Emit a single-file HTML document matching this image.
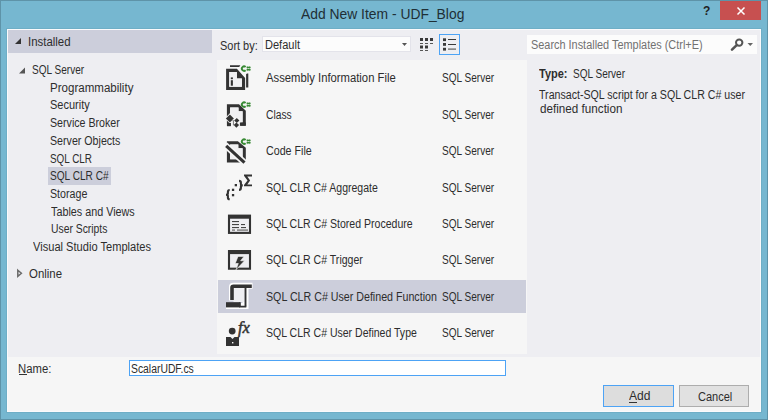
<!DOCTYPE html>
<html><head><meta charset="utf-8"><style>
html,body{margin:0;padding:0;width:768px;height:420px;overflow:hidden;background:#76B7D0;}
body{position:relative;font-family:"Liberation Sans",sans-serif;}
.r{position:absolute;box-sizing:border-box;}
.t{position:absolute;white-space:pre;transform-origin:0 0;}
u{text-decoration:none;border-bottom:1px solid #1e1e1e;}
svg{position:absolute;left:0;top:0;}
</style></head><body>
<div class="r" style="left:0;top:0;width:768px;height:420px;border:1px solid #5E93A8;"></div>
<div class="r" style="left:6px;top:28px;width:756px;height:385px;background:#6EAEC6;"></div>
<div class="r" style="left:7px;top:29px;width:754px;height:383px;background:#EEEEF2;border:1px solid #FAFAFC;"></div>
<div class="r" style="left:8px;top:30px;width:204px;height:23px;background:#CCCEDB;"></div>
<div class="r" style="left:217px;top:60px;width:310px;height:294px;background:#F6F6F6;"></div>
<div class="r" style="left:218px;top:280px;width:308px;height:33px;background:#CCCEDB;"></div>
<div class="r" style="left:48px;top:167px;width:63px;height:18px;background:#CCCEDB;"></div>
<div class="r" style="left:8px;top:357px;width:752px;height:54px;background:#F6F6F6;"></div>
<div class="r" style="left:262px;top:36px;width:149px;height:16px;background:#FCFCFC;border:1px solid #E3E3EA;"></div>
<div class="r" style="left:527px;top:35px;width:230px;height:19px;background:#FCFCFC;"></div>
<div class="r" style="left:129px;top:360px;width:377px;height:16px;background:#FFFFFF;border:1px solid #4DA3F5;"></div>
<div class="r" style="left:603px;top:385px;width:71px;height:22px;background:#DDDDDD;border:1px solid #4DA3F5;"></div>
<div class="r" style="left:679px;top:385px;width:70px;height:22px;background:#E1E1E1;border:1px solid #ADADAD;"></div>
<div class="r" style="left:720px;top:1px;width:41px;height:19px;background:#C75050;"></div>
<div class="r" style="left:439px;top:34px;width:21px;height:21px;border:1px solid #4DA3F5;"></div>
<div class="r" style="left:19px;top:373.5px;width:8px;height:1px;background:#333;"></div>
<div class="r" style="left:629px;top:401.5px;width:8px;height:1px;background:#333;"></div>
<svg width="768" height="420" viewBox="0 0 768 420">
<!-- tree triangles -->
<path d="M15,44 L21,38 L21,44 Z" fill="#333"/>
<path d="M19,73.5 L25,67.5 L25,73.5 Z" fill="#555"/>
<path d="M17.8,270.2 L21.4,273.3 L17.8,276.4 Z" fill="none" stroke="#6a6a6a" stroke-width="1.5" stroke-linejoin="miter"/>
<!-- dropdown arrow -->
<path d="M402,43 H407 L404.5,46 Z" fill="#555"/>
<!-- grid view icon -->
<g fill="#3a3a3a">
<rect x="420" y="38" width="3" height="3"/><rect x="425" y="38" width="3" height="3"/><rect x="430" y="38" width="3" height="3"/>
<rect x="420" y="45.5" width="3" height="3"/><rect x="425" y="45.5" width="3" height="3"/>
</g>
<g fill="#555">
<rect x="420" y="43" width="3" height="1"/><rect x="425" y="43" width="3" height="1"/><rect x="430" y="43" width="3" height="1"/>
<rect x="420" y="50" width="3" height="1"/><rect x="425" y="50" width="3" height="1"/>
</g>
<!-- list view icon -->
<g fill="#3a3a3a">
<rect x="443" y="38.3" width="3" height="2.8"/><rect x="443" y="43" width="3" height="2.8"/><rect x="443" y="47.8" width="3" height="2.8"/>
<rect x="448" y="39" width="8" height="1"/><rect x="448" y="44" width="8" height="1"/><rect x="448" y="48.3" width="8" height="1.7" fill="#888"/>
</g>
<!-- search magnifier -->
<circle cx="739.2" cy="42.6" r="3.2" fill="none" stroke="#555" stroke-width="2"/>
<path d="M736.7,45.1 L732,49.6" stroke="#555" stroke-width="2.6" stroke-linecap="round"/>
<path d="M747.5,43 H753 L750.25,46 Z" fill="#666"/>
<!-- help ? -->
<text x="703" y="15" font-family="Liberation Sans" font-weight="700" font-size="12" fill="#222">?</text>
<!-- close X -->
<path d="M737.5,7.5 L744.5,14.5 M744.5,7.5 L737.5,14.5" stroke="#fff" stroke-width="1.5"/>

<!-- icon 1: assembly info -->
<g fill="#333">
<path d="M230,65.2 H240.4 L239.2,67 H230 Z"/>
<path d="M246.1,74.2 L247,73.4 H248.3 V87.4 H246.1 Z"/>
<path fill-rule="evenodd" d="M226.1,68.8 H236.9 L245.1,77.9 V89.9 H226.1 Z M229.3,72 H236.9 V78.4 H241.9 V86.7 H229.3 Z"/>
<path d="M229.3,72 H236.9 V78.4 H241.9 V86.7 H229.3 Z" fill="#F0F0F2"/>
<rect x="230.8" y="77.4" width="2.1" height="1.8"/>
<rect x="230.8" y="80.2" width="2.1" height="5.5"/>
</g>
<g fill="#388A34"><path d="M245.61,66.93 A2.25,2.25 0 1 0 245.61,70.27" fill="none" stroke="#388A34" stroke-width="1.9"/><rect x="246.6" y="66.70" width="4" height="1.5"/><rect x="246.6" y="69.00" width="4" height="1.5"/><rect x="247.3" y="66.10" width="0.8" height="5" opacity="0.5"/><rect x="249.2" y="66.10" width="0.8" height="5" opacity="0.5"/></g>
<!-- icon 2: class -->
<g fill="#333">
<path fill-rule="evenodd" d="M226.9,104.3 H239 L245.8,110.7 V125.7 H226.9 Z M230.1,107.5 H238.5 V111.2 H242.6 V122.5 H230.1 Z"/>
<path d="M230.1,107.5 H238.5 V111.2 H242.6 V122.5 H230.1 Z" fill="#F0F0F2"/>
<path d="M229.9,113.2 L235.1,118.4 L229.9,123.6 L224.7,118.4 Z" fill="#F6F6F6"/>
<rect x="230.9" y="118" width="9" height="10" fill="#F6F6F6"/>
<path d="M229.9,114.4 L233.9,118.4 L229.9,122.4 L225.9,118.4 Z"/>
<path d="M236.8,117.9 L239.4,120.5 L236.8,123.1 L234.2,120.5 Z"/>
<path d="M236.4,122.4 L239.1,125.1 L236.4,127.8 L233.7,125.1 Z"/>
<path d="M232,119.5 L233.4,120.5 V125 H235" fill="none" stroke="#777" stroke-width="1"/>
<rect x="227" y="123.1" width="3.9" height="3.1"/>
<rect x="240.3" y="122.5" width="5.5" height="3.2"/>
</g>
<g fill="#388A34"><path d="M245.61,102.93 A2.25,2.25 0 1 0 245.61,106.27" fill="none" stroke="#388A34" stroke-width="1.9"/><rect x="246.6" y="102.70" width="4" height="1.5"/><rect x="246.6" y="105.00" width="4" height="1.5"/><rect x="247.3" y="102.10" width="0.8" height="5" opacity="0.5"/><rect x="249.2" y="102.10" width="0.8" height="5" opacity="0.5"/></g>
<!-- icon 3: code file -->
<g fill="#333">
<path fill-rule="evenodd" d="M226.9,141.3 H237.9 L245.8,147.7 V162.4 H226.9 Z M230.1,144.5 H238.3 V148.2 H242.6 V159.2 H230.1 Z"/>
<path d="M230.1,144.5 H238.3 V148.2 H242.6 V159.2 H230.1 Z" fill="#F0F0F2"/>
<path d="M225,144.8 L245.6,163.6" stroke="#F6F6F6" stroke-width="6.4"/>
<path d="M226.2,145.9 L244.5,162.6" stroke="#333" stroke-width="3.1"/>
</g>
<g fill="#388A34"><path d="M245.61,139.93 A2.25,2.25 0 1 0 245.61,143.27" fill="none" stroke="#388A34" stroke-width="1.9"/><rect x="246.6" y="139.70" width="4" height="1.5"/><rect x="246.6" y="142.00" width="4" height="1.5"/><rect x="247.3" y="139.10" width="0.8" height="5" opacity="0.5"/><rect x="249.2" y="139.10" width="0.8" height="5" opacity="0.5"/></g>
<!-- icon 4: aggregate -->
<g fill="none" stroke="#333" stroke-width="2.1">
<path d="M229.7,190 Q227.9,190 227.9,192 V193.5 Q227.9,194.7 226,194.7 Q227.9,194.7 227.9,196 V197.5 Q227.9,199.3 229.7,199.3"/>
<path d="M239,180.9 Q240.9,180.9 240.9,182.7 V184.2 Q240.9,185.4 242.8,185.4 Q240.9,185.4 240.9,186.6 V188.1 Q240.9,189.9 239,189.9"/>
</g>
<path d="M244,174.5 H252 V176.4 H247.3 L250.1,180.4 L247.3,184.4 H252 V186.3 H244 V185 L247.5,180.4 L244,175.8 Z" fill="#333"/>
<g fill="#333"><rect x="231.9" y="188.7" width="2.3" height="2.3"/><rect x="231.9" y="194" width="2.3" height="2.3"/><rect x="234.7" y="184" width="2.3" height="2.3"/></g>
<!-- icon 5: stored procedure -->
<g>
<rect x="229" y="215.8" width="21" height="17.1" fill="#EEEEF2" stroke="#333" stroke-width="2.1"/>
<rect x="228" y="214.8" width="23" height="3.9" fill="#333"/>
<g fill="#444"><rect x="232" y="221" width="7" height="1.1"/><rect x="232" y="224" width="7" height="1.1"/><rect x="241" y="224" width="4" height="1.1"/>
<rect x="232" y="227" width="7" height="1.1"/><rect x="241" y="227" width="5" height="1.1"/></g>
<g fill="#888"><rect x="232" y="229.3" width="3" height="1.6"/><rect x="237" y="229.3" width="11" height="1.6"/></g>
</g>
<!-- icon 6: trigger -->
<g>
<rect x="229" y="251.1" width="21" height="17.6" fill="#EEEEF2" stroke="#333" stroke-width="2.1"/>
<rect x="228" y="250.2" width="23" height="3.9" fill="#333"/>
<path d="M238,256.4 H244 L240.6,260.8 H244.5 L236,269.8 L238.3,263.5 H235.2 Z" fill="#333" stroke="#F6F6F6" stroke-width="0.6"/>
</g>
<!-- icon 7: UDF scroll -->
<g>
<path d="M232,300.5 V287 Q232,285.8 233.5,285.8 H252.5 M245.5,288 V306 H226" fill="none" stroke="#fff" stroke-width="6"/>
<rect x="233.5" y="288.4" width="11.1" height="13.6" fill="#EFEFF2"/>
<path d="M232,300 V287.5 Q232,286.2 233.5,286.2 H251.8" fill="none" stroke="#333" stroke-width="3.6"/>
<path d="M245.5,288 V306.5" fill="none" stroke="#333" stroke-width="1.9"/>
<path d="M226,304.8 H240" fill="none" stroke="#333" stroke-width="5.2"/>
<path d="M240,302.3 V306.6 H246.3" fill="none" stroke="#333" stroke-width="1.6"/>
</g>
<!-- icon 8: UDT -->
<g>
<circle cx="232.2" cy="331.1" r="3.4" fill="#333"/>
<path d="M226,337 H230.5 L232.5,339 L234.5,337 H239 V346 H226 Z" fill="#333"/>
<rect x="232" y="342" width="1.4" height="1.4" fill="#fff"/>
<text x="238" y="332.6" font-family="Liberation Serif" font-style="italic" font-weight="400" font-size="16.5" fill="#333" stroke="#333" stroke-width="0.5">fx</text>
</g>
</svg>

<span class="t" style="left:301.40px;top:7.43px;font-size:14.5px;line-height:14.5px;color:#1f2f36;font-weight:400;transform:scaleX(0.9563)">Add New Item - UDF_Blog</span>
<span class="t" style="left:27.85px;top:35.94px;font-size:12px;line-height:12px;color:#2d2d2d;font-weight:400;transform:scaleX(0.9530)">Installed</span>
<span class="t" style="left:32.25px;top:64.04px;font-size:12px;line-height:12px;color:#2d2d2d;font-weight:400;transform:scaleX(0.8374)">SQL Server</span>
<span class="t" style="left:50.10px;top:81.74px;font-size:12px;line-height:12px;color:#2d2d2d;font-weight:400;transform:scaleX(0.9621)">Programmability</span>
<span class="t" style="left:50.10px;top:99.44px;font-size:12px;line-height:12px;color:#2d2d2d;font-weight:400;transform:scaleX(0.9159)">Security</span>
<span class="t" style="left:50.10px;top:117.14px;font-size:12px;line-height:12px;color:#2d2d2d;font-weight:400;transform:scaleX(0.8870)">Service Broker</span>
<span class="t" style="left:50.10px;top:134.84px;font-size:12px;line-height:12px;color:#2d2d2d;font-weight:400;transform:scaleX(0.8871)">Server Objects</span>
<span class="t" style="left:50.10px;top:152.54px;font-size:12px;line-height:12px;color:#2d2d2d;font-weight:400;transform:scaleX(0.8242)">SQL CLR</span>
<span class="t" style="left:50.30px;top:170.14px;font-size:12px;line-height:12px;color:#2d2d2d;font-weight:400;transform:scaleX(0.8415)">SQL CLR C#</span>
<span class="t" style="left:50.10px;top:187.84px;font-size:12px;line-height:12px;color:#2d2d2d;font-weight:400;transform:scaleX(0.8877)">Storage</span>
<span class="t" style="left:50.80px;top:205.84px;font-size:12px;line-height:12px;color:#2d2d2d;font-weight:400;transform:scaleX(0.8984)">Tables and Views</span>
<span class="t" style="left:50.80px;top:223.44px;font-size:12px;line-height:12px;color:#2d2d2d;font-weight:400;transform:scaleX(0.8631)">User Scripts</span>
<span class="t" style="left:32.50px;top:240.94px;font-size:12px;line-height:12px;color:#2d2d2d;font-weight:400;transform:scaleX(0.9245)">Visual Studio Templates</span>
<span class="t" style="left:28.90px;top:268.34px;font-size:12px;line-height:12px;color:#2d2d2d;font-weight:400;transform:scaleX(0.9511)">Online</span>
<span class="t" style="left:220.10px;top:39.54px;font-size:12px;line-height:12px;color:#2d2d2d;font-weight:400;transform:scaleX(0.9118)">Sort by:</span>
<span class="t" style="left:265.20px;top:39.09px;font-size:12px;line-height:12px;color:#2d2d2d;font-weight:400;transform:scaleX(0.9202)">Default</span>
<span class="t" style="left:531.30px;top:38.64px;font-size:12px;line-height:12px;color:#717171;font-weight:400;transform:scaleX(0.9086)">Search Installed Templates (Ctrl+E)</span>
<span class="t" style="left:539.00px;top:67.94px;font-size:12px;line-height:12px;color:#2d2d2d;font-weight:700;transform:scaleX(0.9164)">Type:</span>
<span class="t" style="left:573.40px;top:67.94px;font-size:12px;line-height:12px;color:#2d2d2d;font-weight:400;transform:scaleX(0.8358)">SQL Server</span>
<span class="t" style="left:539.40px;top:89.24px;font-size:12px;line-height:12px;color:#2d2d2d;font-weight:400;transform:scaleX(0.8851)">Transact-SQL script for a SQL CLR C# user</span>
<span class="t" style="left:539.70px;top:103.04px;font-size:12px;line-height:12px;color:#2d2d2d;font-weight:400;transform:scaleX(0.9731)">defined function</span>
<span class="t" style="left:18.30px;top:362.64px;font-size:12px;line-height:12px;color:#2d2d2d;font-weight:400;transform:scaleX(0.9426)">Name:</span>
<span class="t" style="left:131.40px;top:363.09px;font-size:12px;line-height:12px;color:#2d2d2d;font-weight:400;transform:scaleX(0.8641)">ScalarUDF.cs</span>
<span class="t" style="left:628.50px;top:390.14px;font-size:12px;line-height:12px;color:#2d2d2d;font-weight:400;transform:scaleX(1.0059)">Add</span>
<span class="t" style="left:698.20px;top:390.74px;font-size:12px;line-height:12px;color:#2d2d2d;font-weight:400;transform:scaleX(0.9186)">Cancel</span>
<span class="t" style="left:265.90px;top:72.34px;font-size:12px;line-height:12px;color:#2d2d2d;font-weight:400;transform:scaleX(0.9395)">Assembly Information File</span>
<span class="t" style="left:442.40px;top:72.34px;font-size:12px;line-height:12px;color:#2d2d2d;font-weight:400;transform:scaleX(0.8374)">SQL Server</span>
<span class="t" style="left:265.90px;top:108.74px;font-size:12px;line-height:12px;color:#2d2d2d;font-weight:400;transform:scaleX(0.8565)">Class</span>
<span class="t" style="left:442.40px;top:108.74px;font-size:12px;line-height:12px;color:#2d2d2d;font-weight:400;transform:scaleX(0.8374)">SQL Server</span>
<span class="t" style="left:265.90px;top:145.14px;font-size:12px;line-height:12px;color:#2d2d2d;font-weight:400;transform:scaleX(0.8900)">Code File</span>
<span class="t" style="left:442.40px;top:145.14px;font-size:12px;line-height:12px;color:#2d2d2d;font-weight:400;transform:scaleX(0.8374)">SQL Server</span>
<span class="t" style="left:265.90px;top:181.54px;font-size:12px;line-height:12px;color:#2d2d2d;font-weight:400;transform:scaleX(0.8763)">SQL CLR C# Aggregate</span>
<span class="t" style="left:442.40px;top:181.54px;font-size:12px;line-height:12px;color:#2d2d2d;font-weight:400;transform:scaleX(0.8374)">SQL Server</span>
<span class="t" style="left:265.90px;top:217.94px;font-size:12px;line-height:12px;color:#2d2d2d;font-weight:400;transform:scaleX(0.8781)">SQL CLR C# Stored Procedure</span>
<span class="t" style="left:442.40px;top:217.94px;font-size:12px;line-height:12px;color:#2d2d2d;font-weight:400;transform:scaleX(0.8374)">SQL Server</span>
<span class="t" style="left:265.90px;top:254.34px;font-size:12px;line-height:12px;color:#2d2d2d;font-weight:400;transform:scaleX(0.8780)">SQL CLR C# Trigger</span>
<span class="t" style="left:442.40px;top:254.34px;font-size:12px;line-height:12px;color:#2d2d2d;font-weight:400;transform:scaleX(0.8374)">SQL Server</span>
<span class="t" style="left:265.90px;top:290.74px;font-size:12px;line-height:12px;color:#2d2d2d;font-weight:400;transform:scaleX(0.8887)">SQL CLR C# User Defined Function</span>
<span class="t" style="left:442.40px;top:290.74px;font-size:12px;line-height:12px;color:#2d2d2d;font-weight:400;transform:scaleX(0.8374)">SQL Server</span>
<span class="t" style="left:265.90px;top:327.14px;font-size:12px;line-height:12px;color:#2d2d2d;font-weight:400;transform:scaleX(0.8765)">SQL CLR C# User Defined Type</span>
<span class="t" style="left:442.40px;top:327.14px;font-size:12px;line-height:12px;color:#2d2d2d;font-weight:400;transform:scaleX(0.8374)">SQL Server</span>
</body></html>
